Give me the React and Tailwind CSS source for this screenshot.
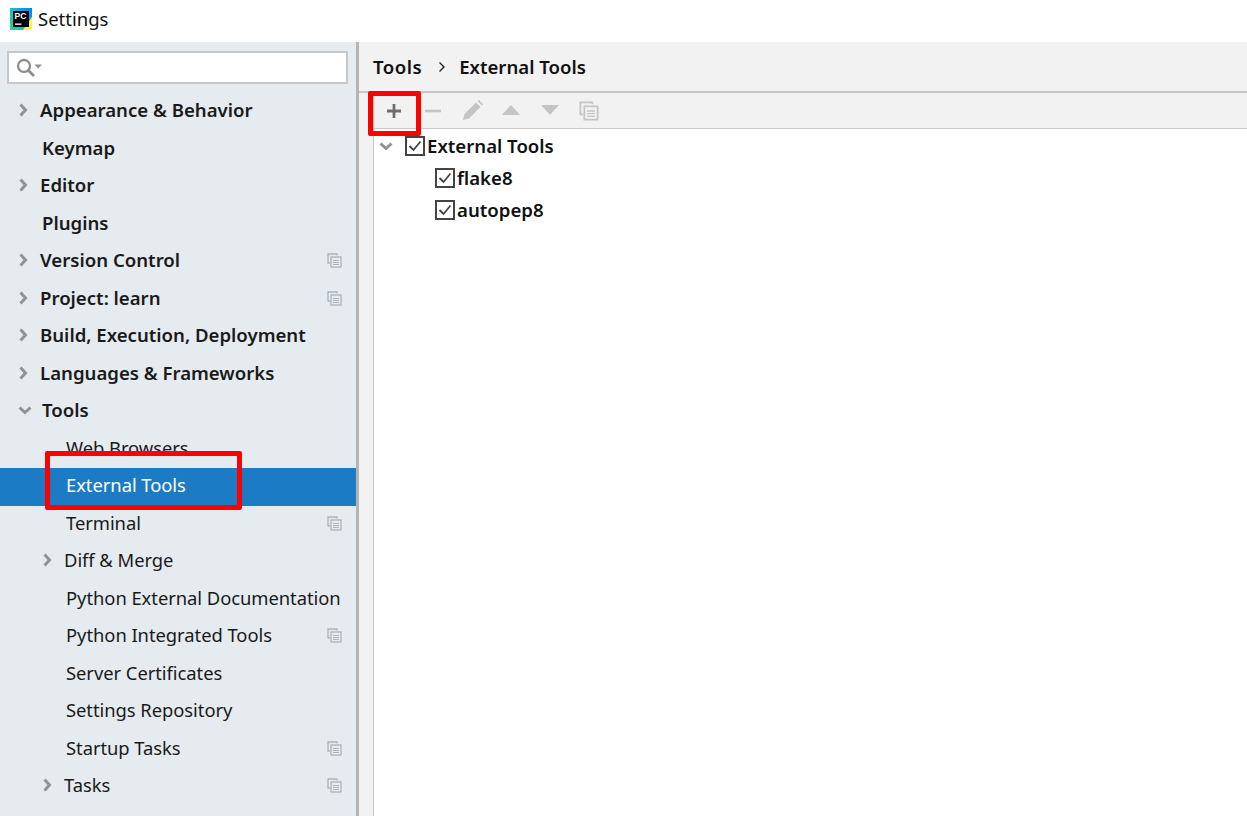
import React from "react";

const font = { fontFamily: '"Noto Sans", "Open Sans", "Liberation Sans", sans-serif' };

function Chevron({ down, className = "" }) {
  return (
    <svg width="14" height="14" viewBox="0 0 14 14" className={className} fill="none" stroke="#8f9397" strokeWidth="3">
      {down ? <path d="M1.5 4.5 L7 9.5 L12.5 4.5" /> : <path d="M4.5 1.5 L9.5 7 L4.5 12.5" />}
    </svg>
  );
}

function Copy({ size = 15, color = "#aab4bb" }) {
  return (
    <svg width={size} height={size} viewBox="0 0 15 15" fill="none" stroke={color} strokeWidth="1.3">
      <path d="M10 2.5 V1 H1 V10 H3" />
      <rect x="4" y="4" width="10" height="10" fill="none" />
      <path d="M6 7.5 H12 M6 9.5 H12 M6 11.5 H12" strokeWidth="1" />
    </svg>
  );
}

function Check() {
  return (
    <div className="w-[20px] h-[20px] border-2 border-[#444] bg-white flex items-center justify-center shrink-0">
      <svg width="16" height="16" viewBox="0 0 16 16" fill="none" stroke="#444" strokeWidth="1.8">
        <path d="M2.5 8 L6.5 12 L13.5 3.5" />
      </svg>
    </div>
  );
}

const rows = [
  { t: "Appearance & Behavior", b: 1, arrow: "r", x: 40 },
  { t: "Keymap", b: 1, x: 42 },
  { t: "Editor", b: 1, arrow: "r", x: 40 },
  { t: "Plugins", b: 1, x: 42 },
  { t: "Version Control", b: 1, arrow: "r", x: 40, c: 1 },
  { t: "Project: learn", b: 1, arrow: "r", x: 40, c: 1 },
  { t: "Build, Execution, Deployment", b: 1, arrow: "r", x: 40 },
  { t: "Languages & Frameworks", b: 1, arrow: "r", x: 40 },
  { t: "Tools", b: 1, arrow: "d", x: 42 },
  { t: "Web Browsers", x: 66 },
  { t: "External Tools", x: 66, sel: 1 },
  { t: "Terminal", x: 66, c: 1 },
  { t: "Diff & Merge", x: 64, arrow: "r2" },
  { t: "Python External Documentation", x: 66 },
  { t: "Python Integrated Tools", x: 66, c: 1 },
  { t: "Server Certificates", x: 66 },
  { t: "Settings Repository", x: 66 },
  { t: "Startup Tasks", x: 66, c: 1 },
  { t: "Tasks", x: 64, arrow: "r2", c: 1 },
];

function Row({ r }) {
  return (
    <div
      className={`relative h-[37.5px] flex items-center pb-[3px] ${r.sel ? "bg-[#1b7bc4] text-white" : "text-[#1a1a1a]"} ${r.b ? "font-semibold text-[18.6px]" : "text-[18.4px] tracking-[-0.05px]"}`}
      style={{ paddingLeft: r.x }}
    >
      {r.arrow === "r" && <Chevron className="absolute left-[16px] top-[10px]" />}
      {r.arrow === "d" && <Chevron down className="absolute left-[18px] top-[10px]" />}
      {r.arrow === "r2" && <Chevron className="absolute left-[40px] top-[10px]" />}
      <span className="whitespace-nowrap">{r.t}</span>
      {r.c && (
        <span className="absolute left-[327px] top-[10px] flex">
          <Copy />
        </span>
      )}
    </div>
  );
}

export default function App() {
  return (
    <div className="relative w-[1247px] h-[816px] overflow-hidden bg-white flex flex-col" style={font}>
      <div className="h-[42px] flex items-center pl-[10px] pb-[4px] shrink-0 bg-white">
        <svg width="22" height="22" viewBox="0 0 22 22">
          <defs>
            <linearGradient id="g" x1="0" y1="1" x2="1" y2="0">
              <stop offset="0" stopColor="#21d789" />
              <stop offset="0.55" stopColor="#21b8c9" />
              <stop offset="1" stopColor="#087cfa" />
            </linearGradient>
          </defs>
          <rect width="22" height="22" fill="url(#g)" />
          <path d="M13 22 L22 9 V22 Z" fill="#fcf84a" />
          <rect x="3" y="3" width="16" height="16" fill="#000" />
          <text x="4.5" y="11" fontSize="8.5" fontWeight="700" fill="#fff" fontFamily="Liberation Sans, sans-serif">PC</text>
          <rect x="5" y="15.5" width="6.5" height="1.3" fill="#fff" />
        </svg>
        <span className="ml-[6px] text-[18.5px] text-[#111]">Settings</span>
      </div>

      <div className="flex flex-1 min-h-0">
        <aside className="w-[359px] shrink-0 bg-[#e6ebf0] border-r-[3px] border-[#b4b4b4]">
          <div className="mt-[9px] mx-[7px] w-[341px] h-[33px] bg-white border-2 border-[#c4c8cb] flex items-center pl-[7px]">
            <svg width="28" height="22" viewBox="0 0 28 22" fill="none" stroke="#8f8f8f" strokeWidth="2.4">
              <circle cx="8" cy="9" r="6" />
              <path d="M12.5 13.5 L18 19" strokeWidth="2.8" />
              <path d="M18.5 7.5 H26 L22.2 11.5 Z" fill="#8f8f8f" stroke="none" />
            </svg>
          </div>
          <div className="mt-[9px]">
            {rows.map((r) => (
              <Row key={r.t} r={r} />
            ))}
          </div>
        </aside>

        <main className="flex-1 min-w-0 flex flex-col bg-[#f2f2f2]">
          <div className="h-[48px] pt-[1px] flex items-center pl-[14px] text-[18.6px] font-semibold text-[#111] border-b-2 border-[#c6c6c6] shrink-0 box-content">
            <span className="tracking-[0.5px]">Tools</span>
            <svg width="10" height="12" viewBox="0 0 10 12" className="ml-[15px] mr-[12px]" fill="none" stroke="#222" strokeWidth="1.4">
              <path d="M2.5 1.5 L7 6 L2.5 10.5" />
            </svg>
            <span>External Tools</span>
          </div>
          <div className="flex-1 flex min-h-0">
            <div className="w-[14px] shrink-0" />
            <div className="flex-1 flex flex-col border-l border-[#c6c6c6] min-w-0">
              <div className="h-[35px] flex items-center border-b border-[#c9c9c9] box-content shrink-0 bg-[#f2f2f2]">
                <svg width="20" height="20" viewBox="0 0 20 20" className="ml-[10px]" stroke="#6e6e6e" strokeWidth="2.8">
                  <path d="M10 3 V17 M3 10 H17" />
                </svg>
                <svg width="18" height="18" viewBox="0 0 18 18" className="ml-[20px]" stroke="#c4c4c4" strokeWidth="2.6">
                  <path d="M1 9 H17" />
                </svg>
                <svg width="24" height="24" viewBox="0 0 24 24" className="ml-[18px]" fill="#c4c4c4">
                  <path d="M3 21 L4.5 15 L16 3.5 L20.5 8 L9 19.5 Z M17.5 2 L19 1 L23 5 L22 6.5 Z" />
                </svg>
                <svg width="20" height="11" viewBox="0 0 20 11" className="ml-[17px]" fill="#c4c4c4">
                  <path d="M10 0 L19 10 H1 Z" />
                </svg>
                <svg width="20" height="11" viewBox="0 0 20 11" className="ml-[19px]" fill="#c4c4c4">
                  <path d="M1 0 H19 L10 10 Z" />
                </svg>
                <span className="ml-[19px] flex">
                  <Copy size={20} color="#c4c4c4" />
                </span>
              </div>
              <div className="flex-1 bg-white pt-[1px] text-[18.6px] font-semibold text-[#111]">
                <div className="h-[32px] flex items-center pl-[5px]">
                  <Chevron down />
                  <span className="ml-[12px]"><Check /></span>
                  <span className="ml-[2px]">External Tools</span>
                </div>
                <div className="h-[32px] flex items-center pl-[61px]">
                  <Check />
                  <span className="ml-[2px]">flake8</span>
                </div>
                <div className="h-[32px] flex items-center pl-[61px]">
                  <Check />
                  <span className="ml-[2px]">autopep8</span>
                </div>
              </div>
            </div>
          </div>
        </main>
      </div>

      <div className="absolute left-[45px] top-[451px] w-[197px] h-[59px] border-[5px] border-[#ff0000] rounded-[2px]" />
      <div className="absolute left-[368px] top-[91px] w-[53px] h-[45px] border-[5px] border-[#ff0000] rounded-[2px]" />
    </div>
  );
}
